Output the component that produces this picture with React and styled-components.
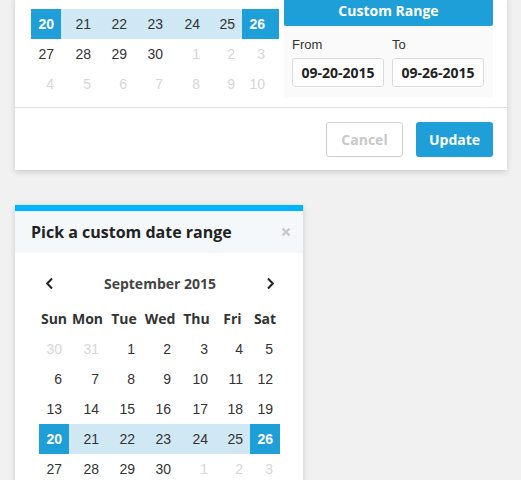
import styled, { createGlobalStyle } from "styled-components";

const GlobalStyle = createGlobalStyle`
  body {
    margin: 0;
    background: #f1f1f1;
    font-family: "Liberation Sans", Arial, sans-serif;
    color: #333;
  }
`;

const Page = styled.div`
  margin-top: -4px;
  padding: 0 15px 40px;
  display: flex;
  flex-direction: column;
  align-items: flex-start;
  gap: 35px;
`;

const Panel = styled.div`
  width: ${(p) => p.$width}px;
  background: #fff;
  box-shadow: 0 2px 6px rgba(0, 0, 0, 0.16);
  border-top: ${(p) => (p.$accent ? "6px solid #00b4ff" : "none")};
`;

const PanelHeader = styled.div`
  height: 42px;
  background: #f4f8fb;
  display: flex;
  align-items: center;
  justify-content: space-between;
  padding: 0 12px 0 16px;
`;

const Title = styled.h2`
  margin: 0;
  font-family: "Open Sans", sans-serif;
  font-weight: 700;
  font-size: 16px;
  color: #222;
`;

const CloseButton = styled.button`
  border: none;
  background: none;
  padding: 0;
  width: 10px;
  height: 10px;
  display: flex;
`;

const RangeBody = styled.div`
  display: flex;
  align-items: flex-start;
  gap: 5px;
  padding: 13px 14px 8px 16px;
`;

const CalendarBody = styled.div`
  padding: 15px 23px 0 24px;
`;

const CalendarWrap = styled.div`
  width: ${(p) => p.$width}px;
`;

const Nav = styled.div`
  height: 30px;
  margin-bottom: 6px;
  display: flex;
  align-items: center;
  justify-content: space-between;
  padding: 0 5px 0 6px;
`;

const NavArrow = styled.button`
  border: none;
  background: none;
  padding: 0;
  width: 9px;
  height: 13px;
  display: flex;
`;

const MonthLabel = styled.div`
  font-family: "Open Sans", sans-serif;
  font-weight: 700;
  font-size: 14px;
  color: #444;
`;

const Grid = styled.div`
  display: grid;
  grid-template-columns: ${(p) => p.$cols};
`;

const WeekDay = styled.div`
  height: 30px;
  line-height: 30px;
  text-align: center;
  font-family: "Open Sans", sans-serif;
  font-weight: 700;
  font-size: 14px;
  color: #333;
`;

const Day = styled.div`
  height: 30px;
  line-height: 30px;
  text-align: right;
  padding-right: ${(p) => p.$pad}px;
  font-size: 14px;
  color: ${(p) => (p.$edge ? "#fff" : p.$muted ? "#d6d6d6" : "#333")};
  font-weight: ${(p) => (p.$edge ? 700 : 400)};
  background: ${(p) =>
    p.$edge ? "#1e9fd8" : p.$inRange ? "#d0e7f4" : "transparent"};
`;

const Sidebar = styled.div`
  width: 209px;
  margin-top: -13px;
  display: flex;
  flex-direction: column;
`;

const CustomRange = styled.div`
  height: 30px;
  line-height: 30px;
  text-align: center;
  background: #1e9fd8;
  color: #fff;
  font-family: "Open Sans", sans-serif;
  font-weight: 700;
  font-size: 14px;
  border-radius: 0 0 2px 2px;
`;

const RangeBox = styled.div`
  background: #fafafa;
  display: flex;
  gap: 8px;
  padding: 11px 10px 10px 8px;
`;

const Field = styled.div`
  display: flex;
  flex-direction: column;
`;

const FieldLabel = styled.label`
  height: 16px;
  line-height: 16px;
  margin-bottom: 5px;
  font-size: 13px;
  color: #333;
`;

const DateInput = styled.input`
  box-sizing: border-box;
  width: 92px;
  height: 29px;
  border: 1px solid #dcdcdc;
  border-radius: 3px;
  background: #fff;
  text-align: center;
  font-family: "Open Sans", sans-serif;
  font-weight: 700;
  font-size: 14px;
  color: #222;
  padding: 0;
`;

const Footer = styled.div`
  border-top: 1px solid #e3e3e3;
  padding: 14px 14px 13px;
  display: flex;
  justify-content: flex-end;
  gap: 13px;
`;

const Button = styled.button`
  width: 77px;
  height: 35px;
  border-radius: 3px;
  font-family: "Open Sans", sans-serif;
  font-weight: 700;
  font-size: 14px;
  padding: 0;
`;

const CancelButton = styled(Button)`
  background: #fff;
  border: 1px solid #cfcfcf;
  color: #c8c8c8;
`;

const UpdateButton = styled(Button)`
  background: #1e9fd8;
  border: none;
  color: #fff;
`;

const weekDays = ["Sun", "Mon", "Tue", "Wed", "Thu", "Fri", "Sat"];

const weeks = [
  [30, 31, 1, 2, 3, 4, 5],
  [6, 7, 8, 9, 10, 11, 12],
  [13, 14, 15, 16, 17, 18, 19],
  [20, 21, 22, 23, 24, 25, 26],
  [27, 28, 29, 30, 1, 2, 3],
  [4, 5, 6, 7, 8, 9, 10],
];

function ChevronLeft() {
  return (
    <svg width="9" height="13" viewBox="0 0 9 13">
      <path d="M7 1.5 L2.2 6.5 L7 11.5" fill="none" stroke="#222" strokeWidth="2" />
    </svg>
  );
}

function ChevronRight() {
  return (
    <svg width="9" height="13" viewBox="0 0 9 13">
      <path d="M2 1.5 L6.8 6.5 L2 11.5" fill="none" stroke="#222" strokeWidth="2" />
    </svg>
  );
}

// fromWeek: the first panel is scrolled, only its last weeks are in view
function Calendar({ cols, width, lastPad = 7, fromWeek = 0, lastWeek = 6, header = true }) {
  return (
    <CalendarWrap $width={width}>
      {header && (
        <Nav>
          <NavArrow aria-label="Previous month">
            <ChevronLeft />
          </NavArrow>
          <MonthLabel>September 2015</MonthLabel>
          <NavArrow aria-label="Next month">
            <ChevronRight />
          </NavArrow>
        </Nav>
      )}
      <Grid $cols={cols}>
        {header && weekDays.map((d) => <WeekDay key={d}>{d}</WeekDay>)}
        {weeks.slice(fromWeek, lastWeek).map((week, idx) => {
          const w = idx + fromWeek;
          return week.map((day, i) => {
            const muted = (w === 0 && day > 20) || (w >= 4 && day < 20);
            return (
              <Day
                key={`${w}-${i}`}
                $pad={i === 6 ? lastPad : 7}
                $muted={muted}
                $edge={w === 3 && (i === 0 || i === 6)}
                $inRange={w === 3 && i > 0 && i < 6}
              >
                {day}
              </Day>
            );
          });
        })}
      </Grid>
    </CalendarWrap>
  );
}

export default function App() {
  return (
    <>
      <GlobalStyle />
      <Page>
        <Panel $width={492}>
          <RangeBody>
            <Calendar
              cols="30px 37px 36px 36px 37px 35px 37px"
              width={248}
              lastPad={14}
              fromWeek={3}
              header={false}
            />
            <Sidebar>
              <CustomRange>Custom Range</CustomRange>
              <RangeBox>
                <Field>
                  <FieldLabel>From</FieldLabel>
                  <DateInput defaultValue="09-20-2015" />
                </Field>
                <Field>
                  <FieldLabel>To</FieldLabel>
                  <DateInput defaultValue="09-26-2015" />
                </Field>
              </RangeBox>
            </Sidebar>
          </RangeBody>
          <Footer>
            <CancelButton>Cancel</CancelButton>
            <UpdateButton>Update</UpdateButton>
          </Footer>
        </Panel>

        <Panel $width={288} $accent>
          <PanelHeader>
            <Title>Pick a custom date range</Title>
            <CloseButton aria-label="Close">
              <svg width="10" height="10" viewBox="0 0 10 10">
                <path d="M1.5 1.5 L8.5 8.5 M8.5 1.5 L1.5 8.5" stroke="#c8c8c8" strokeWidth="2.4" />
              </svg>
            </CloseButton>
          </PanelHeader>
          <CalendarBody>
            <Calendar cols="30px 37px 36px 36px 37px 35px 30px" width={241} lastWeek={5} />
          </CalendarBody>
        </Panel>
      </Page>
    </>
  );
}
